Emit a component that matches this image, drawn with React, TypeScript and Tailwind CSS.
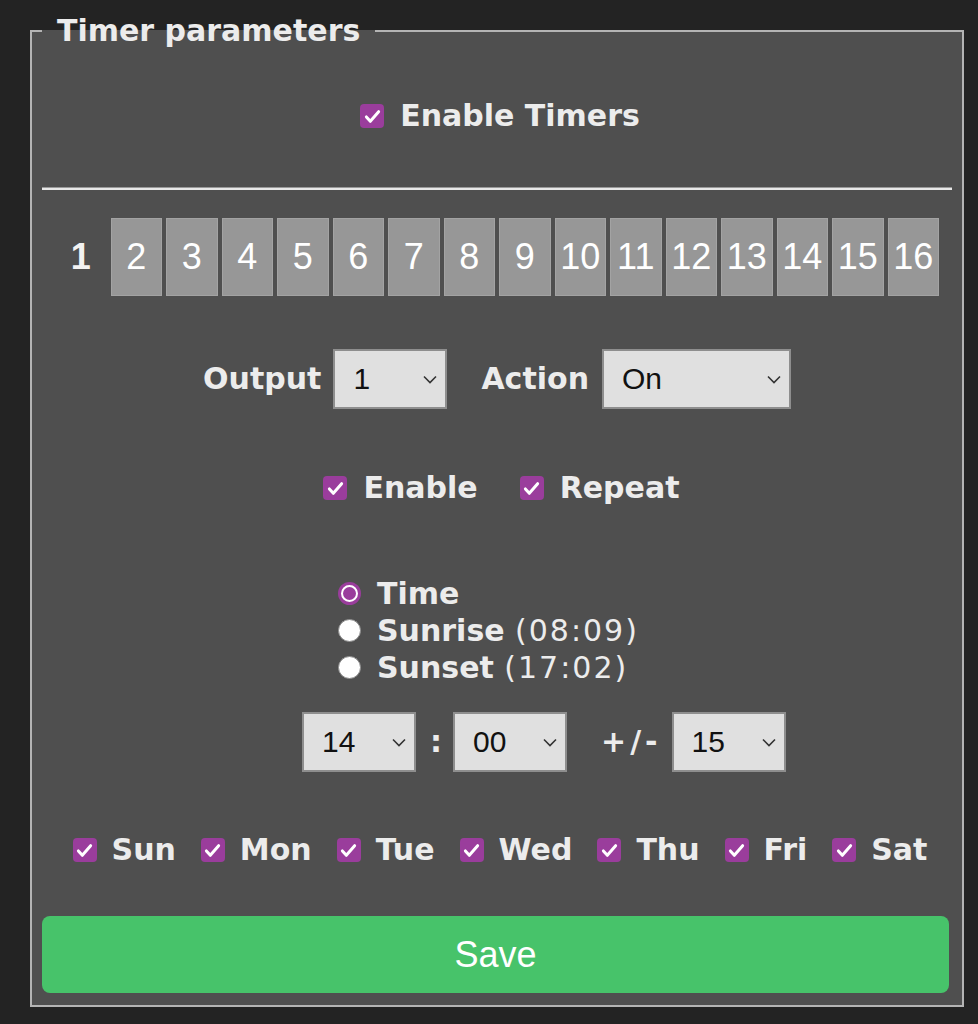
import React from 'react'

const label = "font-['DejaVu_Sans',Verdana,sans-serif] font-bold text-[30px] leading-[36px] text-[#ececec]"
const arial = "font-['Liberation_Sans',Arial,sans-serif]"

function Box() {
  return (
    <span className="inline-flex h-[24px] w-[24px] shrink-0 items-center justify-center rounded-[4px] bg-[#9a3d9c]">
      <svg viewBox="0 0 24 24" className="h-[21px] w-[21px]" fill="none" stroke="white" strokeWidth={3.4} strokeLinecap="round" strokeLinejoin="round">
        <path d="M5 12.5l4.5 5L19 6.5" />
      </svg>
    </span>
  )
}

function Check({ text, gap = 'gap-[16px]' }: { text: string; gap?: string }) {
  return (
    <div className={`flex items-center ${gap}`}>
      <Box />
      <span className={label}>{text}</span>
    </div>
  )
}

function Select({ value, w }: { value: string; w: string }) {
  return (
    <div className={`flex h-[60px] items-center justify-between border-2 border-[#8e8e8e] bg-[#e0e0e0] pl-[18px] pr-[8px] ${w}`}>
      <span className={`${arial} text-[30px] leading-none text-[#111]`}>{value}</span>
      <svg width="14" height="9" viewBox="0 0 14 9" fill="none" stroke="#333" strokeWidth={1.6}>
        <path d="M1 1.5l6 6 6-6" />
      </svg>
    </div>
  )
}

function Radio({ checked }: { checked?: boolean }) {
  if (checked) {
    return (
      <span className="inline-flex h-[23px] w-[23px] shrink-0 items-center justify-center rounded-full border-[3px] border-[#9a3d9c] bg-white">
        <span className="h-[13px] w-[13px] rounded-full bg-[#9a3d9c]" />
      </span>
    )
  }
  return <span className="inline-block h-[23px] w-[23px] shrink-0 rounded-full border border-[#8a8a8a] bg-white" />
}

export default function App() {
  const tabs = Array.from({ length: 16 }, (_, i) => i + 1)
  const days = ['Sun', 'Mon', 'Tue', 'Wed', 'Thu', 'Fri', 'Sat']

  return (
    <div className="h-[1024px] bg-[#232323] pt-[13px]">
      <fieldset className="ml-[30px] w-[934px] border-2 border-[#b4b4b4] bg-[#4f4f4f] px-[10px] pb-[12px]">
        <legend className={`${label} ml-0 px-[15px]`}>Timer parameters</legend>

        {/* global enable */}
        <div className="mt-[49px] flex h-[36px] justify-center pl-[6px]">
          <Check text="Enable Timers" />
        </div>

        <div className="mt-[53px] h-[3px] border-t border-[#9a9a9a] bg-[#e8e8e8]" />

        {/* timer tabs */}
        <div className="mt-[28px] flex h-[78px] justify-center gap-[4px]">
          {tabs.map((n) =>
            n === 1 ? (
              <div key={n} className={`flex w-[51.5px] items-center justify-center ${arial} text-[36px] font-bold text-[#f2f2f2]`}>
                {n}
              </div>
            ) : (
              <div key={n} className={`flex w-[51.5px] items-center justify-center border border-[#a3a3a3] bg-[#979797] ${arial} text-[36px] text-white`}>
                {n}
              </div>
            )
          )}
        </div>

        {/* output / action */}
        <div className="mt-[53px] flex h-[60px] items-center justify-center">
          <span className={label}>Output</span>
          <div className="ml-[12px]">
            <Select value="1" w="w-[114px]" />
          </div>
          <span className={`${label} ml-[34px]`}>Action</span>
          <div className="ml-[13px]">
            <Select value="On" w="w-[189px]" />
          </div>
        </div>

        {/* enable / repeat */}
        <div className="mt-[61px] flex h-[36px] items-center justify-center gap-[42px] pl-[9px]">
          <Check text="Enable" />
          <Check text="Repeat" />
        </div>

        {/* time source */}
        <div className="mt-[69px] flex flex-col pl-[296px]">
          <div className="flex h-[37px] items-center gap-[16px]">
            <Radio checked />
            <span className={label}>Time</span>
          </div>
          <div className="flex h-[37px] items-center gap-[16px]">
            <Radio />
            <span className={label}>
              Sunrise <span className="font-normal tracking-[2px]">(08:09)</span>
            </span>
          </div>
          <div className="flex h-[37px] items-center gap-[16px]">
            <Radio />
            <span className={label}>
              Sunset <span className="font-normal tracking-[2px]">(17:02)</span>
            </span>
          </div>
        </div>

        {/* time selection */}
        <div className="mt-[26px] flex h-[60px] items-center pl-[260px]">
          <Select value="14" w="w-[114px]" />
          <span className={`${label} ml-[14px] mr-[11px]`}>:</span>
          <Select value="00" w="w-[114px]" />
          <span className={`${label} ml-[34px] mr-[10px] tracking-[4px]`}>+/-</span>
          <Select value="15" w="w-[114px]" />
        </div>

        {/* days */}
        <div className="mt-[60px] flex h-[36px] items-center justify-center gap-[25px] pl-[6px]">
          {days.map((d) => (
            <Check key={d} text={d} gap="gap-[15px]" />
          ))}
        </div>

        <button className={`mt-[48px] flex h-[77px] w-[907px] items-center justify-center rounded-[8px] bg-[#47c36a] ${arial} text-[36px] text-white`}>
          Save
        </button>
      </fieldset>
    </div>
  )
}
